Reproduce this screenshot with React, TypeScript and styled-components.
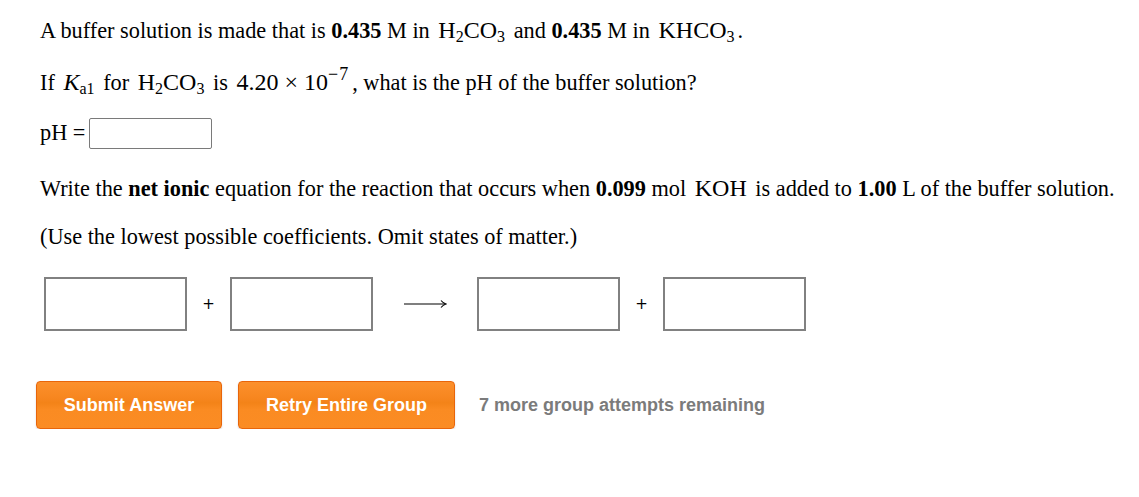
import React from "react";
import styled, { createGlobalStyle } from "styled-components";

const Global = createGlobalStyle`
  html, body { margin: 0; padding: 0; background: #fff; }
  body { font-family: "Liberation Serif", "Times New Roman", serif; color: #000; }
`;

const Page = styled.div`
  padding: 18px 0 0 40px;
  display: flex;
  flex-direction: column;
  align-items: flex-start;
`;

const Para = styled.p<{ $mb: number }>`
  margin: 0 0 ${(p) => p.$mb}px 0;
  height: 24px;
  font-size: 22.3px;
  line-height: 24px;
  white-space: nowrap;
`;

const Math = styled.span`
  font-family: "Liberation Serif", "Times New Roman", serif;
  font-size: 24px;
  line-height: 1;
  margin: 0 3px;
`;

const Sub = styled.sub`
  font-size: 16px;
  vertical-align: -4px;
  line-height: 0;
`;

const Sup = styled.sup`
  font-size: 18px;
  vertical-align: 10px;
  line-height: 0;
  letter-spacing: 1px;
`;

const Op = styled.span`
  margin: 0 6px;
`;

const It = styled.i`
  font-style: italic;
`;

const PHRow = styled.div`
  display: flex;
  align-items: center;
  height: 32px;
  margin-bottom: 27px;
  font-size: 22.3px;
`;

const PHInput = styled.div`
  width: 121px;
  height: 29px;
  margin-left: 4px;
  border: 1px solid #7a7a7a;
  border-radius: 2px;
  box-sizing: content-box;
`;

const EqRow = styled.div`
  display: flex;
  align-items: center;
  margin-left: 4px;
  height: 54px;
  margin-bottom: 50px;
`;

const EqBox = styled.div`
  width: 139px;
  height: 50px;
  border: 2px solid #818181;
  box-sizing: content-box;
`;

const Plus = styled.span`
  width: 43px;
  text-align: center;
  font-family: "DejaVu Sans", sans-serif;
  font-size: 15px;
  color: #000;
`;

const ArrowWrap = styled.div`
  width: 104px;
  display: flex;
  justify-content: center;
`;

const ButtonRow = styled.div`
  display: flex;
  align-items: center;
  margin-left: -4px;
  gap: 16px;
`;

const Button = styled.button<{ $w: number }>`
  width: ${(p) => p.$w}px;
  height: 48px;
  border: 1px solid #e8650a;
  border-radius: 4px;
  background: linear-gradient(#fc902c 0%, #f7861f 35%, #f38318 45%, #fa8b22 60%, #fb8c24 100%);
  color: #fff;
  font-family: "Liberation Sans", Arial, sans-serif;
  font-weight: bold;
  font-size: 18px;
  box-shadow: 0 1px 2px rgba(0, 0, 0, 0.15);
  padding: 0;
`;

const Remaining = styled.span`
  margin-left: 8px;
  font-family: "Liberation Sans", Arial, sans-serif;
  font-weight: bold;
  font-size: 18px;
  color: #7b7b7b;
`;

export default function App() {
  return (
    <>
      <Global />
      <Page>
        <Para $mb={28}>
          A buffer solution is made that is <b>0.435</b> M in{" "}
          <Math>
            H<Sub>2</Sub>CO<Sub>3</Sub>
          </Math>{" "}
          and <b>0.435</b> M in{" "}
          <Math>
            KHCO<Sub>3</Sub>
          </Math>
          .
        </Para>
        <Para $mb={23}>
          If{" "}
          <Math>
            <It>K</It>
            <Sub>a1</Sub>
          </Math>{" "}
          for{" "}
          <Math>
            H<Sub>2</Sub>CO<Sub>3</Sub>
          </Math>{" "}
          is{" "}
          <Math>
            4.20<Op>×</Op>10<Sup>−7</Sup>
          </Math>
          , what is the pH of the buffer solution?
        </Para>
        <PHRow>
          pH =<PHInput />
        </PHRow>
        <Para $mb={25}>
          Write the <b>net ionic</b> equation for the reaction that occurs when <b>0.099</b> mol{" "}
          <Math>KOH</Math> is added to <b>1.00</b> L of the buffer solution.
        </Para>
        <Para $mb={28}>(Use the lowest possible coefficients. Omit states of matter.)</Para>
        <EqRow>
          <EqBox />
          <Plus>+</Plus>
          <EqBox />
          <ArrowWrap>
            <svg width="44" height="10" viewBox="0 0 44 10">
              <line x1="1" y1="5" x2="42" y2="5" stroke="#000" strokeWidth="1.2" />
              <path d="M38 1.5 Q40 4 43 5 Q40 6 38 8.5" fill="none" stroke="#000" strokeWidth="1.1" />
            </svg>
          </ArrowWrap>
          <EqBox />
          <Plus>+</Plus>
          <EqBox />
        </EqRow>
        <ButtonRow>
          <Button $w={186}>Submit Answer</Button>
          <Button $w={217}>Retry Entire Group</Button>
          <Remaining>7 more group attempts remaining</Remaining>
        </ButtonRow>
      </Page>
    </>
  );
}
